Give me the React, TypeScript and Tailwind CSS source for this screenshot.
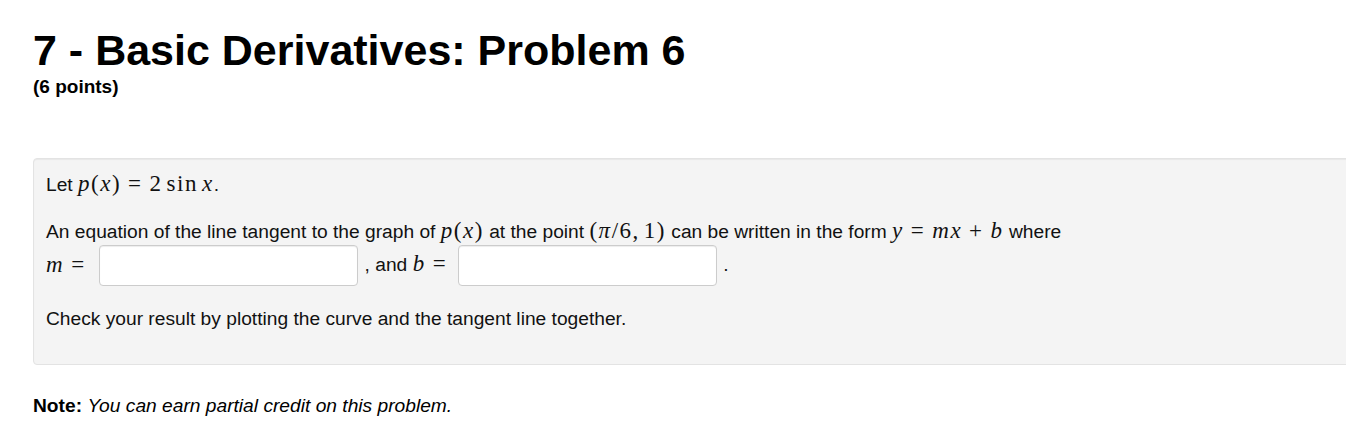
import React from "react";

const mathFont = { fontFamily: '"Liberation Serif", "Times New Roman", serif' };

function Mi({ children }: { children: React.ReactNode }) {
  return <span className="italic">{children}</span>;
}

function Op({ children }: { children: React.ReactNode }) {
  return <span className="mx-[7px]">{children}</span>;
}

function M({ children }: { children: React.ReactNode }) {
  return (
    <span className="text-[23px] leading-[0] tracking-[1.5px] whitespace-nowrap" style={mathFont}>
      {children}
    </span>
  );
}

function AnswerBox() {
  return (
    <input
      type="text"
      className="h-[41px] w-[259px] rounded-[4px] border border-[#cccccc] bg-white shadow-[inset_0_1px_1px_rgba(0,0,0,0.075)] outline-none"
    />
  );
}

export default function App() {
  return (
    <div
      className="min-h-[427px] overflow-hidden bg-white pl-[33px] pt-[27px] text-[19.2px] text-[#111]"
      style={{ fontFamily: '"Liberation Sans", Arial, sans-serif' }}
    >
      <h1 className="text-[43px] font-bold leading-[1.1] text-black">
        7 - Basic Derivatives: Problem 6
      </h1>
      <p className="text-[19px] font-bold leading-[1.4] text-black">(6 points)</p>

      <div className="mt-[57px] -mr-[40px] rounded-[4px] border border-[#e3e3e3] bg-[#f4f4f4] pl-[12px] pt-[13px] pb-[32px] shadow-[inset_0_1px_1px_rgba(0,0,0,0.05)]">
        <p className="leading-[26px]">
          Let{" "}
          <M>
            <Mi>p</Mi>(<Mi>x</Mi>)<Op>=</Op>2<span className="ml-[4px] mr-[4px]">sin</span>
            <Mi>x</Mi>
          </M>
          .
        </p>

        <div className="mt-[21px]">
          <p className="leading-[26px]">
            An equation of the line tangent to the graph of{" "}
            <M>
              <Mi>p</Mi>(<Mi>x</Mi>)
            </M>{" "}
            at the point{" "}
            <M>
              (<Mi>π</Mi>/6,<span className="ml-[4px]">1</span>)
            </M>{" "}
            can be written in the form{" "}
            <M>
              <Mi>y</Mi>
              <Op>=</Op>
              <Mi>mx</Mi>
              <Op>+</Op>
              <Mi>b</Mi>
            </M>{" "}
            where
          </p>
          <div className="flex h-[41px] items-center">
            <M>
              <Mi>m</Mi>
              <span className="ml-[7px]">=</span>
            </M>
            <span className="ml-[13px]">
              <AnswerBox />
            </span>
            <span className="ml-[7px]">
              , and{" "}
              <M>
                <Mi>b</Mi>
                <span className="ml-[7px]">=</span>
              </M>
            </span>
            <span className="ml-[11px]">
              <AnswerBox />
            </span>
            <span className="ml-[6px]">.</span>
          </div>
        </div>

        <p className="mt-[20px] leading-[26px]">
          Check your result by plotting the curve and the tangent line together.
        </p>
      </div>

      <p className="mt-[28px] leading-[26px] text-black">
        <span className="font-bold">Note:</span>{" "}
        <span className="italic">You can earn partial credit on this problem.</span>
      </p>
    </div>
  );
}
